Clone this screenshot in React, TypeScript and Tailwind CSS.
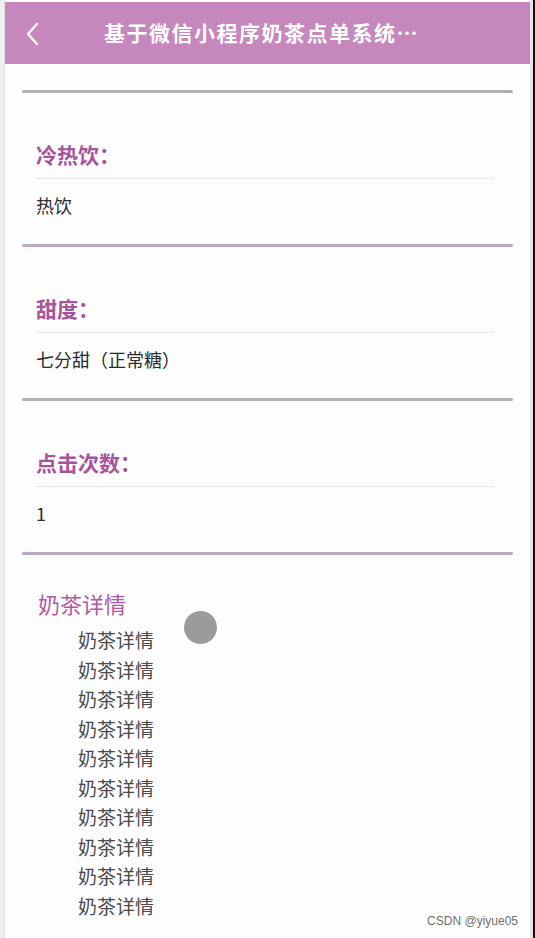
import React from "react";

const cjk = { fontFamily: '"Noto Sans CJK SC", "Noto Sans", sans-serif' };

type Field = { label: string; value: string; tint: string };

const fields: Field[] = [
    { label: "冷热饮：", value: "热饮", tint: "bg-[#b0aeb2]" },
    { label: "甜度：", value: "七分甜（正常糖）", tint: "bg-[#bba8c1]" },
    { label: "点击次数：", value: "1", tint: "bg-[#b0aeb2]" },
];

const Divider = ({ tint }: { tint: string }) => (
    <div className={`mx-[17px] h-[3px] rounded-full ${tint}`} />
);

const FieldBlock = ({ label, value }: Field) => (
    <div className="pl-[31px] pr-[36px] pt-[47px] pb-[25px]">
        <p className="text-[21px] leading-[28px] font-bold text-[#a6549b]">{label}</p>
        <div className="mt-[10px] border-t border-dotted border-[#d6d6d6]" />
        <p className="mt-[12px] text-[18px] leading-[28px] text-[#2b2b2b]">{value}</p>
    </div>
);

const App = () => {
    return (
        <div className="relative w-[535px] h-[938px] overflow-hidden bg-white flex" style={cjk}>
            <div className="w-[5px] h-full bg-[#f0f0f0] border-r border-[#e2e2e2]" />

            <div className="flex-1 flex flex-col pt-[2px] bg-[#fdfdfd]">
                {/* nav bar */}
                <div className="h-[62px] bg-[#c587bc] flex items-center relative">
                    <svg className="absolute left-[20px] top-[20px]" width="16" height="24" viewBox="0 0 16 24" fill="none">
                        <path d="M12 2 L3 12 L12 22" stroke="#fff" strokeWidth="2.4" strokeLinecap="round" strokeLinejoin="round" />
                    </svg>
                    <p className="pl-[99px] text-[21px] font-bold text-white tracking-[1.5px]">
                        基于微信小程序奶茶点单系统…
                    </p>
                </div>

                <div className="mt-[26px]">
                    {fields.map((f, i) => (
                        <div key={i}>
                            <Divider tint={f.tint} />
                            <FieldBlock {...f} />
                        </div>
                    ))}
                    <Divider tint="bg-[#bba8c1]" />
                </div>

                <div className="pl-[33px] pt-[33px]">
                    <p className="text-[22px] leading-[30px] text-[#b15aa3]">奶茶详情</p>
                    <ul className="mt-[7px] pl-[40px]">
                        {Array.from({ length: 10 }).map((_, i) => (
                            <li key={i} className="text-[19px] leading-[29.5px] text-[#4a4a4a]">奶茶详情</li>
                        ))}
                    </ul>
                </div>
            </div>

            <div className="w-[3px] h-full bg-[#e6e6e6]" />
            <div className="w-[2px] h-full bg-[#111]" />

            {/* tap indicator */}
            <div className="absolute left-[184px] top-[611px] w-[33px] h-[33px] rounded-full bg-[#9b9b9b] blur-[0.5px]" />

            <p
                className="absolute right-[17px] bottom-[8px] text-[12px] text-[#6f6f6f]"
                style={{ fontFamily: '"Liberation Sans", Arial, sans-serif' }}
            >
                CSDN @yiyue05
            </p>
        </div>
    );
};

export default App;
